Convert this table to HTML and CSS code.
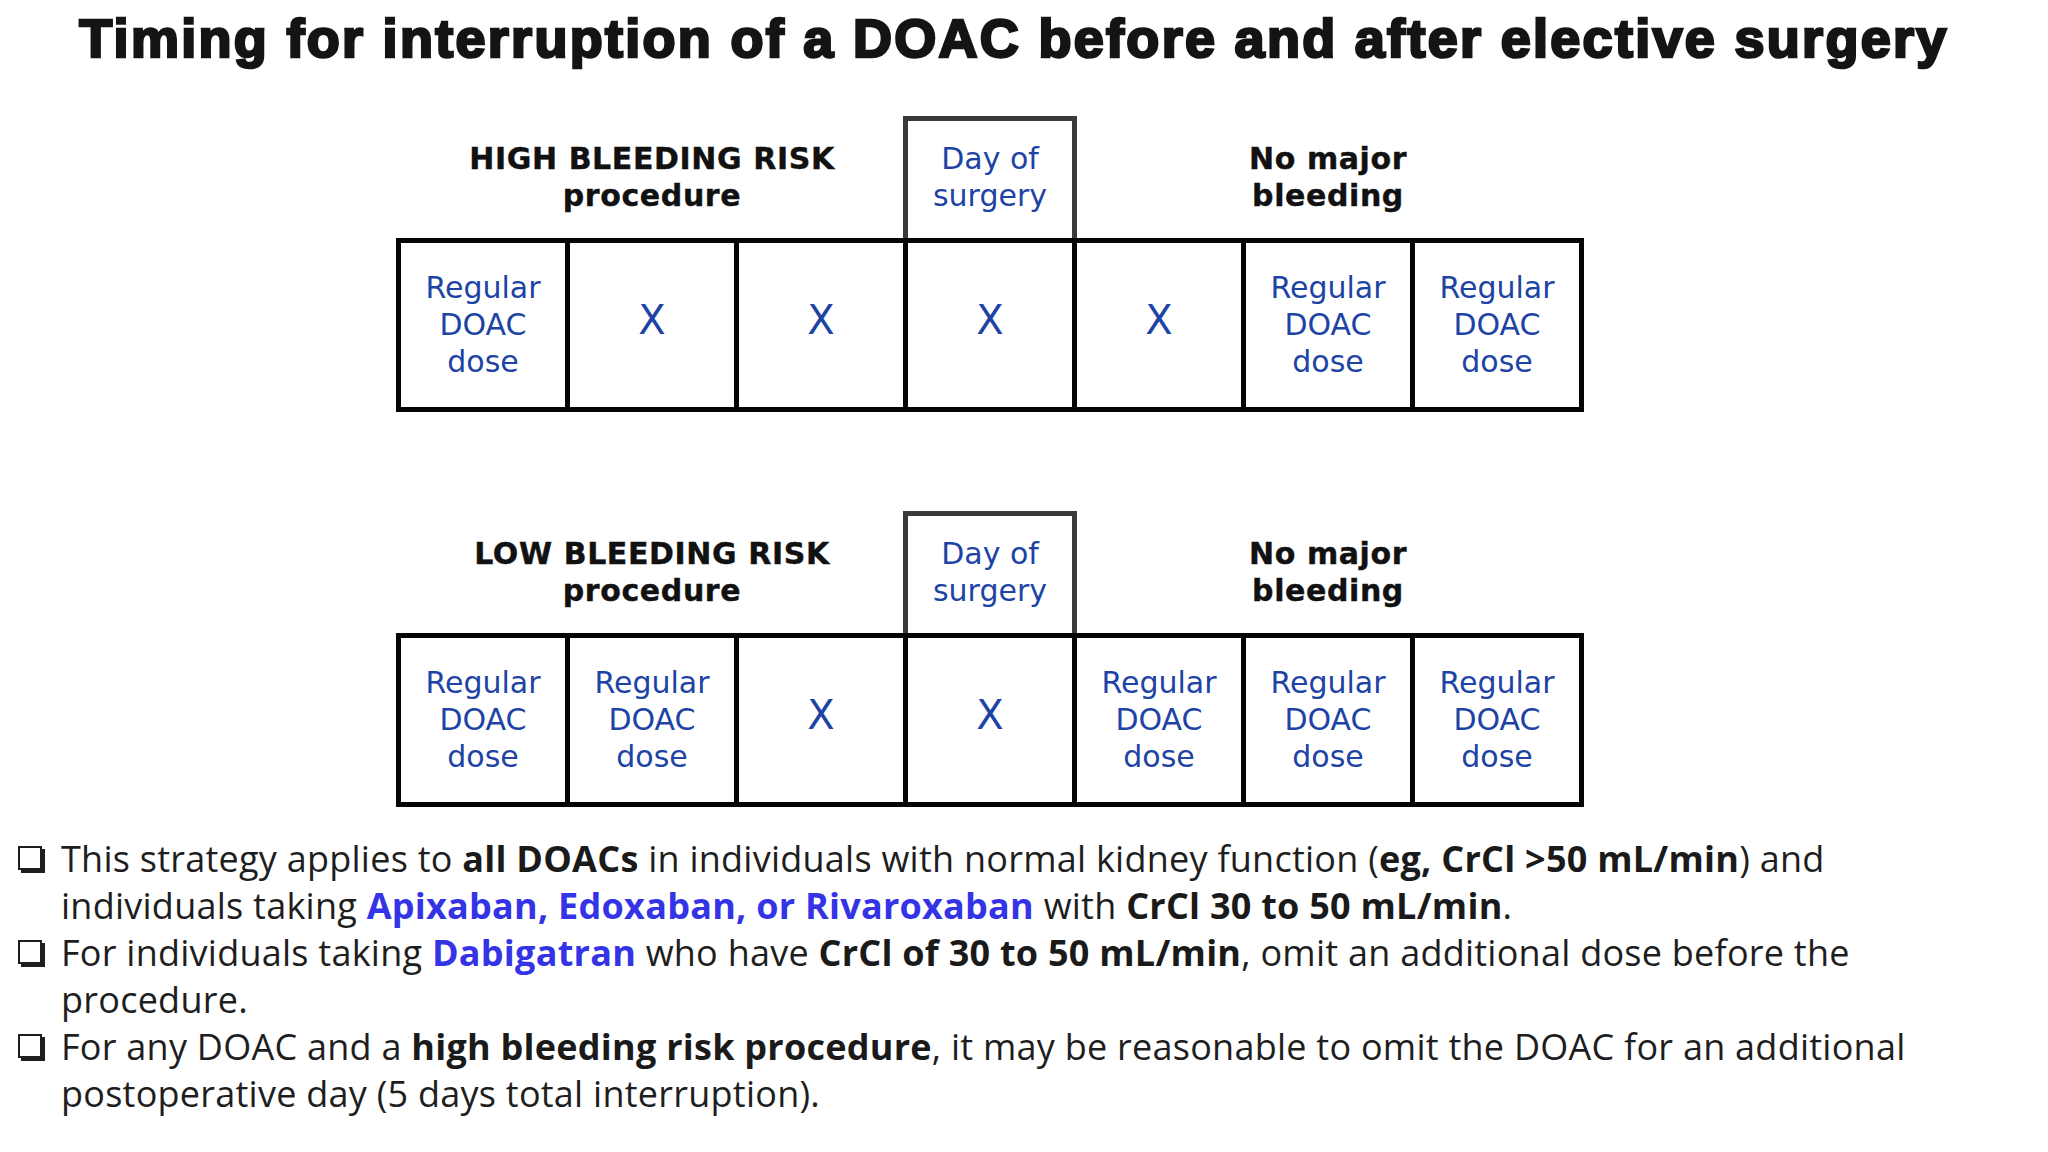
FILE: index.html
```html
<!DOCTYPE html>
<html lang="en">
<head>
<meta charset="utf-8">
<title>Timing for interruption of a DOAC</title>
<link rel="stylesheet" href="styles.css">
</head>
<body>
<main class="page">
  <h1 class="title">Timing for interruption of a DOAC before and after elective surgery</h1>

  <section class="schedule">
    <div class="schedule__head">
      <div class="head-label head-label--pre">HIGH BLEEDING RISK<br>procedure</div>
      <div class="head-day">Day of<br>surgery</div>
      <div class="head-label head-label--post">No major<br>bleeding</div>
    </div>
    <div class="schedule__grid">
      <div class="cell">Regular<br>DOAC<br>dose</div>
      <div class="cell cell--x">X</div>
      <div class="cell cell--x">X</div>
      <div class="cell cell--x">X</div>
      <div class="cell cell--x">X</div>
      <div class="cell">Regular<br>DOAC<br>dose</div>
      <div class="cell">Regular<br>DOAC<br>dose</div>
    </div>
  </section>

  <section class="schedule schedule--second">
    <div class="schedule__head">
      <div class="head-label head-label--pre">LOW BLEEDING RISK<br>procedure</div>
      <div class="head-day">Day of<br>surgery</div>
      <div class="head-label head-label--post">No major<br>bleeding</div>
    </div>
    <div class="schedule__grid">
      <div class="cell">Regular<br>DOAC<br>dose</div>
      <div class="cell">Regular<br>DOAC<br>dose</div>
      <div class="cell cell--x">X</div>
      <div class="cell cell--x">X</div>
      <div class="cell">Regular<br>DOAC<br>dose</div>
      <div class="cell">Regular<br>DOAC<br>dose</div>
      <div class="cell">Regular<br>DOAC<br>dose</div>
    </div>
  </section>

  <ul class="notes">
    <li class="note">
      <span class="note__box"></span>
      <p class="note__text">This strategy applies to <b>all DOACs</b> in individuals with normal kidney function (<b>eg, CrCl &gt;50 mL/min</b>) and<br>individuals taking <b class="drug">Apixaban, Edoxaban, or Rivaroxaban</b> with <b>CrCl 30 to 50 mL/min</b>.</p>
    </li>
    <li class="note">
      <span class="note__box"></span>
      <p class="note__text">For individuals taking <b class="drug">Dabigatran</b> who have <b>CrCl of 30 to 50 mL/min</b>, omit an additional dose before the<br>procedure.</p>
    </li>
    <li class="note">
      <span class="note__box"></span>
      <p class="note__text">For any DOAC and a <b>high bleeding risk procedure</b>, it may be reasonable to omit the DOAC for an additional<br>postoperative day (5 days total interruption).</p>
    </li>
  </ul>
</main>
</body>
</html>
```

FILE: styles.css
```css
* { box-sizing: border-box; }

html, body {
  margin: 0;
  padding: 0;
  background: #ffffff;
}

.page {
  width: 2048px;
  min-height: 1152px;
  display: flex;
  flex-direction: column;
}

.title {
  margin: 7px 0 0 0;
  padding-right: 20px;
  text-align: center;
  font-family: "Liberation Sans", Arial, sans-serif;
  font-weight: 700;
  font-size: 54px;
  line-height: 62px;
  letter-spacing: 2.3px;
  color: #141414;
  -webkit-text-stroke: 2.6px #141414;
}

.schedule {
  margin: 47px 0 0 396px;
  width: 1188px;
  display: flex;
  flex-direction: column;
}

.schedule--second {
  margin-top: 99px;
}

.schedule__head {
  display: grid;
  grid-template-columns: repeat(7, 1fr);
  column-gap: 5px;
  padding: 0 5px;
  height: 122px;
}

.head-label {
  align-self: center;
  text-align: center;
  font-family: "DejaVu Sans", Verdana, sans-serif;
  font-weight: 700;
  font-size: 30px;
  line-height: 37px;
  letter-spacing: 0.6px;
  color: #111111;
  -webkit-text-stroke: 0.4px #111111;
  padding-bottom: 0;
}

.head-label--pre {
  grid-column: 1 / 4;
}

.head-label--post {
  grid-column: 5 / 8;
}

.head-day {
  grid-column: 4 / 5;
  margin: 0 -5px;
  border: 5px solid #3a3a3a;
  border-bottom: 0;
  display: flex;
  align-items: center;
  justify-content: center;
  text-align: center;
  padding-bottom: 6px;
  font-family: "DejaVu Sans", Verdana, sans-serif;
  font-size: 30px;
  line-height: 37px;
  color: #1d44a5;
}

.schedule__grid {
  display: grid;
  grid-template-columns: repeat(7, 1fr);
  gap: 5px;
  border: 5px solid #050505;
  background: #050505;
  height: 174px;
}

.cell {
  background: #ffffff;
  display: flex;
  align-items: center;
  justify-content: center;
  text-align: center;
  font-family: "DejaVu Sans", Verdana, sans-serif;
  font-size: 30px;
  line-height: 37px;
  color: #1d44a5;
  padding-bottom: 2px;
}

.cell--x {
  font-size: 40px;
  padding-bottom: 10px;
}

.notes {
  list-style: none;
  margin: 28px 0 0 0;
  padding: 0;
  display: flex;
  flex-direction: column;
}

.note {
  display: flex;
  align-items: flex-start;
}

.note__box {
  flex: none;
  width: 24px;
  height: 24px;
  margin: 11px 19px 0 18px;
  border: 2px solid #1e1e1e;
  box-shadow: 3px 3px 0 #1e1e1e;
  background: #ffffff;
}

.note__text {
  margin: 0;
  font-family: "Open Sans", "Noto Sans", sans-serif;
  font-size: 36px;
  line-height: 47px;
  letter-spacing: 0.25px;
  color: #1e1e1e;
  white-space: nowrap;
}

.note__text b {
  font-weight: 700;
  color: #1a1a1a;
}

.note__text .drug {
  color: #3434e6;
}
```
